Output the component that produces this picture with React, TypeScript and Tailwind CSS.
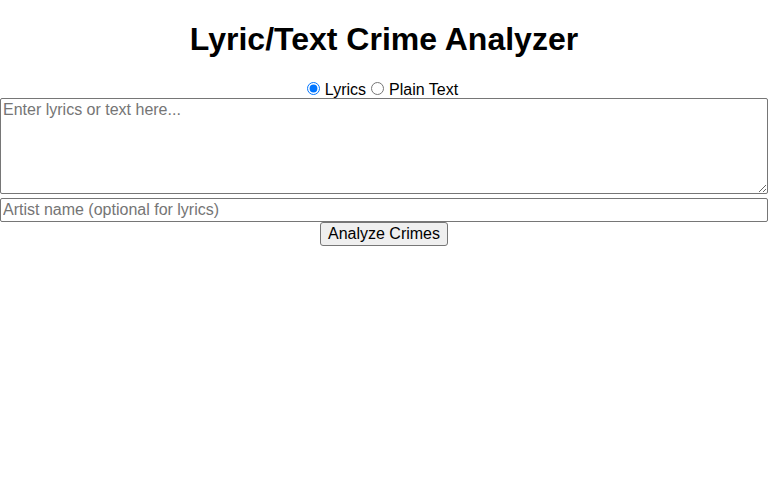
import React from "react";

export default function App() {
  return (
    <div className="font-['Liberation_Sans',Arial,sans-serif] text-black bg-white min-h-[480px]">
      <h1 className="text-[32px] font-bold text-center leading-[37px] pt-[21px] pb-[21px]">
        Lyric/Text Crime Analyzer
      </h1>
      <div className="text-center h-[19px] text-[16px] leading-[18px] pr-[8px]">
        <label>
          <input type="radio" name="mode" defaultChecked className="w-[13px] h-[13px] mt-[3px] mr-[5px] ml-[5px] accent-[#0075ff] align-baseline" />
          Lyrics
        </label>
        <label>
          <input type="radio" name="mode" className="w-[13px] h-[13px] mt-[3px] mr-[5px] ml-[5px] accent-[#0075ff] align-baseline" />
          Plain Text
        </label>
      </div>
      <textarea
        placeholder="Enter lyrics or text here..."
        className="block w-full h-[96px] border border-[#767676] rounded-[2px] px-[2px] py-[2px] text-[16px] leading-[18px] placeholder:text-[#757575] font-['Liberation_Sans',Arial,sans-serif]"
      />
      <input
        type="text"
        placeholder="Artist name (optional for lyrics)"
        className="block w-full h-[24px] mt-[4px] border border-[#767676] rounded-[2px] px-[2px] text-[16px] placeholder:text-[#757575] font-['Liberation_Sans',Arial,sans-serif]"
      />
      <button className="block mx-auto h-[24px] w-[128px] border border-[#767676] bg-[#efefef] rounded-[3px] px-[6px] text-[16px] leading-[18px] font-['Liberation_Sans',Arial,sans-serif]">
        Analyze Crimes
      </button>
    </div>
  );
}
